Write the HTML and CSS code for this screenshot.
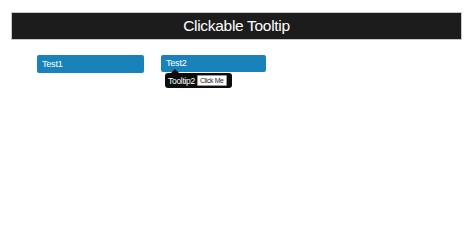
FILE: index.html
```html
<!DOCTYPE html>
<html>
<head>
<meta charset="utf-8">
<link rel="stylesheet" href="styles.css">
</head>
<body>
<header class="header">Clickable Tooltip</header>
<div class="row">
  <div class="item item-1"><span class="btn">Test1</span></div>
  <div class="item item-2">
    <span class="btn btn-2">Test2</span>
    <div class="tip-box">
      <span class="tip-text">Tooltip2</span>
      <span class="tip-btn">Click Me</span>
    </div>
  </div>
</div>
</body>
</html>
```
FILE: styles.css
```css
html, body {
  margin: 0;
  padding: 0;
  background: #fff;
  font-family: "Liberation Sans", Arial, sans-serif;
}
.header {
  margin: 12px 12px 0 11px;
  height: 28px;
  background: #1c1c1c;
  border: 1px solid #c8c8c8;
  box-sizing: border-box;
  color: #fff;
  font-size: 15.5px;
  letter-spacing: -0.3px;
  line-height: 26px;
  text-align: center;
}
.row {
  display: flex;
  align-items: flex-start;
  padding: 15px 0 0 37px;
  gap: 17px;
}
.item {
  display: flex;
  flex-direction: column;
  align-items: flex-start;
}
.btn {
  display: block;
  width: 107px;
  height: 18px;
  box-sizing: border-box;
  background: #1a82bb;
  color: #fff;
  font-size: 9px;
  letter-spacing: -0.2px;
  line-height: 18px;
  padding-left: 5px;
  border-radius: 2px;
}
.btn-2 {
  width: 105px;
  height: 17px;
  line-height: 17px;
}
.tip-box {
  position: relative;
  margin: 1px 0 0 4px;
  display: flex;
  align-items: center;
  gap: 2px;
  height: 15px;
  padding: 0 5px 0 3px;
  background-color: #0d0d0d;
  border-radius: 3px;
}
.tip-box::before {
  content: "";
  position: absolute;
  left: 6px;
  top: -4px;
  border-left: 4px solid transparent;
  border-right: 4px solid transparent;
  border-bottom: 4px solid #0d0d0d;
}
.tip-text {
  color: #fff;
  font-size: 8.5px;
  letter-spacing: -0.3px;
}
.tip-btn {
  background: #fff;
  color: #222;
  font-size: 6.8px;
  letter-spacing: -0.3px;
  line-height: 9px;
  padding: 0 2px;
  border: 1px solid #999;
  border-radius: 1px;
}
```
